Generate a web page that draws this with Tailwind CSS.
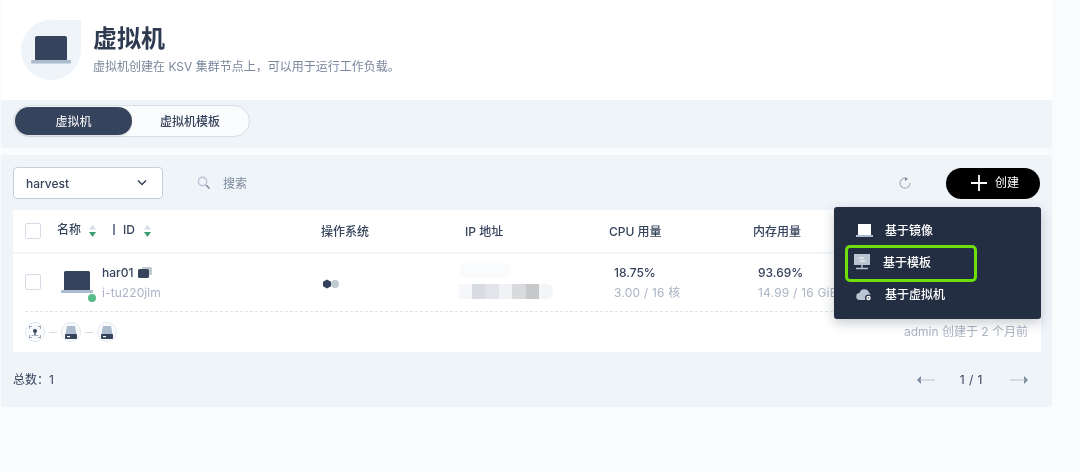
<!DOCTYPE html>
<html lang="zh"><head><meta charset="utf-8">
<script src="https://cdn.jsdelivr.net/npm/@tailwindcss/browser@4"></script>
</head>
<body class="m-0 bg-[#f9fbfd] font-['Inter','Noto_Sans_CJK_SC',sans-serif] text-[#36435c] overflow-hidden">
<div class="relative w-[1080px] h-[472px] pl-px blur-[0.4px]">
<div class="w-[1051px]">
  <header class="h-[100px] bg-white flex items-start pt-[20px] pl-[20px]">
    <div class="w-[60px] h-[60px] bg-[#eff4f9] rounded-full rounded-tr-none flex items-center justify-center">
      <svg width="40" height="30" viewBox="0 0 40 30"><rect x="4" y="1" width="32" height="25" rx="2" fill="#36435c"/><rect x="0" y="25" width="40" height="3.5" rx="1" fill="#abbcce"/></svg>
    </div>
    <div class="ml-[12px] mt-px">
      <h1 class="text-[24px] leading-[36px] font-semibold text-[#2d3a50]">虚拟机</h1>
      <p class="text-[12px] leading-[18px] text-[#79879c] mt-px">虚拟机创建在 KSV 集群节点上，可以用于运行工作负载。</p>
    </div>
  </header>
  <div class="h-[48px] bg-[#eff4f9] pl-[12px] pt-[5px]">
    <div class="w-[237px] h-[32px] rounded-full bg-[#f9fbfd] border border-[#d8dee5] p-[1px] flex text-[12px] leading-[30px] text-center">
      <div class="w-[117px] h-[28px] rounded-full bg-[#36435c] text-white shadow-sm">虚拟机</div>
      <div class="w-[116px] h-[28px] font-medium">虚拟机模板</div>
    </div>
  </div>
  <div class="h-[7px]"></div>
  <section class="h-[252px] bg-[#eff4f9] rounded-[4px] pl-[12px] pr-[11px]">
    <div class="h-[55px] flex items-center pt-[1px]">
      <div class="w-[150px] h-[32px] rounded-[4px] border border-[#c5cedb] bg-white flex items-center justify-between pl-[12px] pr-[14px] text-[12px]">
        <span class="font-medium mt-[2px]">harvest</span>
        <svg width="12" height="8" viewBox="0 0 12 8" fill="none" stroke="#36435c" stroke-width="1.5"><path d="M2 1.5 6 5.5 10 1.5"/></svg>
      </div>
      <svg class="ml-[34px]" width="14" height="14" viewBox="0 0 14 14" fill="none"><circle cx="5.5" cy="5.5" r="4.2" stroke="#bcc6d3" stroke-width="1.4"/><path d="M9 9l3.5 3.5" stroke="#79879c" stroke-width="1.5"/></svg>
      <span class="ml-[12px] text-[12px] text-[#79879c] mt-[2px]">搜索</span>
      <svg class="ml-auto" width="14" height="14" viewBox="0 0 14 14" fill="none"><path d="M7.5 2.2A5 5 0 1 0 12 7" stroke="#abb4c4" stroke-width="1.3"/><path d="M7 1v4l3-2z" fill="#79879c"/></svg>
      <div class="ml-[34px] mr-px w-[94px] h-[31px] rounded-full bg-black text-white flex items-center pl-[25px] text-[12px]">
        <svg width="16" height="16" viewBox="0 0 16 16" stroke="white" stroke-width="1.8"><path d="M8 0v16M0 8h16"/></svg>
        <span class="ml-[8px]">创建</span>
      </div>
    </div>
    <div class="bg-white">
      <div class="h-[44px] border-b-2 border-[#f2f6fa] flex items-center pl-[12px] text-[12px] font-medium">
        <span class="w-[16px] h-[16px] rounded-[2px] border border-[#d5dce6] bg-white"></span>
        <span class="ml-[16px] -mt-[2px]">名称</span>
        <svg class="ml-[7px]" width="9" height="14" viewBox="0 0 9 14"><path d="M4.5 1 8 5.5H1z" fill="#d5dce6"/><path d="M4.500 13 8 8H1z" fill="#3c9c72"/></svg>
        <span class="ml-[16px] w-[2px] h-[11px] bg-[#79879c] -mt-[3px]"></span>
        <span class="ml-[8px] -mt-[2px]">ID</span>
        <svg class="ml-[8px]" width="9" height="14" viewBox="0 0 9 14"><path d="M4.5 1 8 5.5H1z" fill="#d5dce6"/><path d="M4.500 13 8 8H1z" fill="#3c9c72"/></svg>
        <span class="ml-[169px] mt-px">操作系统</span>
        <span class="ml-[96px] w-[144px] mt-px">IP 地址</span>
        <span class="w-[144px] mt-px">CPU 用量</span>
        <span class="mt-px">内存用量</span>
      </div>
      <div class="h-[57px] flex pl-[12px] mx-0">
        <span class="mt-[20px] w-[16px] h-[16px] rounded-[2px] border border-[#d5dce6] bg-white"></span>
        <div class="relative ml-[20px] mt-[16px] w-[32px] h-[26px]">
          <svg width="32" height="26" viewBox="0 0 32 26"><rect x="3" y="1" width="26" height="20" rx="1.5" fill="#36435c"/><rect x="0" y="20" width="32" height="3" rx="1" fill="#abbcce"/></svg>
          <span class="absolute left-[27px] top-[24px] w-[8px] h-[8px] rounded-full bg-[#55bc8a]"></span>
        </div>
        <div class="ml-[9px] pt-[10px] w-[220px]">
          <div class="flex items-center text-[12px] leading-[18px] font-medium">har01
            <svg class="ml-[5px]" width="14" height="12" viewBox="0 0 14 12"><rect x="4" y="0" width="10" height="8" rx="1" fill="#c1c9d1"/><rect x="0" y="2" width="11" height="9" rx="1.5" fill="#36435c"/></svg>
          </div>
          <div class="text-[12px] leading-[21px] text-[#abb4c4] tracking-[0.1px]">i-tu220jlm</div>
        </div>
        <div class="flex w-[137px] pt-[25px]">
          <svg width="18" height="10" viewBox="0 0 18 10"><circle cx="13" cy="5" r="4" fill="#c1c9d1"/><path d="M5 .5 9 2.8v4.4L5 9.500 1 7.200V2.800z" fill="#36435c"/></svg>
        </div>
        <div class="w-[155px] pt-[9px]">
          <div class="w-[52px] h-[15px] rounded-[6px] bg-[#f9fbfd]"></div>
          <div class="mt-[6px] w-[94px] h-[15px] flex">
            <i class="w-[13px] bg-[#f5f7fa]"></i><i class="w-[13px] bg-[#d8dbe2]"></i><i class="w-[14px] bg-[#e2e4e9]"></i><i class="w-[13px] bg-[#f0f2f6]"></i><i class="w-[14px] bg-[#d8dade]"></i><i class="w-[13px] bg-[#c7c8ca]"></i><i class="w-[14px] rounded-r-md bg-[#f3f5f8]"></i>
          </div>
        </div>
        <div class="w-[144px] pt-[10px] text-[12px]">
          <div class="leading-[18px] font-medium">18.75%</div>
          <div class="leading-[21px] text-[#abb4c4] tracking-[0.2px]">3.00 / 16 核</div>
        </div>
        <div class="pt-[10px] text-[12px]">
          <div class="leading-[18px] font-medium">93.69%</div>
          <div class="leading-[21px] text-[#abb4c4] tracking-[0.2px]">14.99 / 16 GiB</div>
        </div>
      </div>
      <div class="ml-[12px] mr-[13px] h-[41px] border-t border-dashed border-[#dde4eb] flex items-center text-[12px]">
        <span class="w-[20px] h-[20px] rounded-full border border-[#e3e9ef] bg-[#f9fbfd] flex items-center justify-center">
          <svg width="12" height="12" viewBox="0 0 12 12" fill="none" stroke="#79879c" stroke-width="1.3"><path d="M0 3V0h3M9 0h3v3M0 9v3h3M9 12h3V9"/><path d="M2.500 9.500h7" stroke="#abb4c4" stroke-width="1"/><circle cx="6" cy="5" r="2" fill="#36435c" stroke="none"/><path d="M6 7v2" stroke="#36435c"/></svg>
        </span>
        <span class="mx-[4px] w-[8px] h-px bg-[#d5dce6]"></span>
        <span class="w-[20px] h-[20px] rounded-full border border-[#e3e9ef] bg-[#f9fbfd] flex items-center justify-center">
          <svg width="12" height="13" viewBox="0 0 12 13"><path d="M2 0h8l1.500 8H.500z" fill="#abbcce"/><rect y="8" width="12" height="5" rx="1" fill="#36435c"/><rect x="2" y="10" width="3" height="1.200" fill="#fff"/></svg>
        </span>
        <span class="mx-[4px] w-[8px] h-px bg-[#d5dce6]"></span>
        <span class="w-[20px] h-[20px] rounded-full border border-[#e3e9ef] bg-[#f9fbfd] flex items-center justify-center">
          <svg width="12" height="13" viewBox="0 0 12 13"><path d="M2 0h8l1.500 8H.500z" fill="#abbcce"/><rect y="8" width="12" height="5" rx="1" fill="#36435c"/><rect x="2" y="10" width="3" height="1.200" fill="#fff"/></svg>
        </span>
        <span class="ml-auto text-[#abb4c4]">admin 创建于 2 个月前</span>
      </div>
    </div>
    <div class="h-[55px] flex items-center text-[12px] text-[#36435c]">
      <span>总数：1</span>
      <svg class="ml-auto" width="18" height="8" viewBox="0 0 18 8"><path d="M0 4 4 0v8z" fill="#79879c"/><path d="M3 4h15" stroke="#c1c9d1" stroke-width="1.200"/></svg>
      <span class="ml-[25px] mr-[27px] tracking-[0.5px]">1 / 1</span>
      <svg class="mr-[13px]" width="18" height="8" viewBox="0 0 18 8"><path d="M18 4l-4-4v8z" fill="#79879c"/><path d="M0 4h15" stroke="#c1c9d1" stroke-width="1.200"/></svg>
    </div>
  </section>
</div>
<div class="absolute left-[834px] top-[207px] w-[207px] h-[112px] rounded-[3px] bg-[#242e42] shadow-[0_4px_12px_rgba(36,46,66,0.25)] text-white text-[12px] font-medium">
  <div class="absolute left-[22px] top-[16px] flex items-center">
    <svg width="17" height="14" viewBox="0 0 17 14"><rect x="2" y="0" width="13" height="11" fill="#fff"/><rect x="0" y="11" width="17" height="2" fill="#abbcce"/></svg>
    <span class="ml-[12px] leading-[16px]">基于镜像</span>
  </div>
  <div class="absolute left-[11px] top-[38px] w-[132px] h-[37px] rounded-[5px] border-[3px] border-[#6fdf0a]"></div>
  <div class="absolute left-[20px] top-[46px] flex items-center">
    <svg width="16" height="16" viewBox="0 0 16 16"><rect x="0" y="0" width="16" height="11" fill="#b9c5d2"/><path d="M8 11v3M2 14.500h12" stroke="#b9c5d2" stroke-width="1.400"/><path d="M5 4h5M6 7h5" stroke="#fff"/></svg>
    <span class="ml-[13px] leading-[16px] mt-[2px]">基于模板</span>
  </div>
  <div class="absolute left-[22px] top-[80px] flex items-center">
    <svg width="17" height="14" viewBox="0 0 17 14"><path d="M4 12a3.500 3.500 0 0 1-.5-7A5 5 0 0 1 13 4.500 3.500 3.500 0 0 1 14 9v3z" fill="#b9c5d2"/><circle cx="12.500" cy="10" r="3.500" fill="#242e42"/><circle cx="12.500" cy="10" r="2.200" fill="#fff"/><circle cx="12.500" cy="10" r=".8" fill="#242e42"/></svg>
    <span class="ml-[12px] leading-[16px]">基于虚拟机</span>
  </div>
</div>
</div>
</body></html>
